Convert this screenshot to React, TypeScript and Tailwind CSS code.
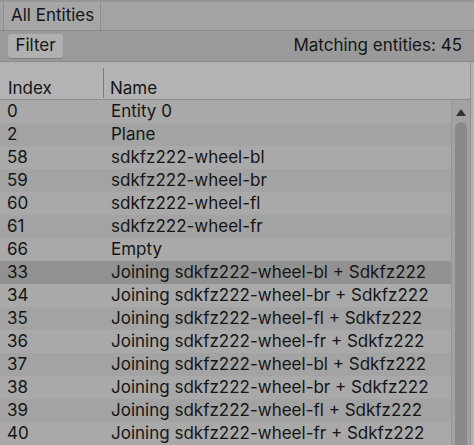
import React from 'react';

const rows: [string, string][] = [
  ['0', 'Entity 0'],
  ['2', 'Plane'],
  ['58', 'sdkfz222-wheel-bl'],
  ['59', 'sdkfz222-wheel-br'],
  ['60', 'sdkfz222-wheel-fl'],
  ['61', 'sdkfz222-wheel-fr'],
  ['66', 'Empty'],
  ['33', 'Joining sdkfz222-wheel-bl + Sdkfz222'],
  ['34', 'Joining sdkfz222-wheel-br + Sdkfz222'],
  ['35', 'Joining sdkfz222-wheel-fl + Sdkfz222'],
  ['36', 'Joining sdkfz222-wheel-fr + Sdkfz222'],
  ['37', 'Joining sdkfz222-wheel-bl + Sdkfz222'],
  ['38', 'Joining sdkfz222-wheel-br + Sdkfz222'],
  ['39', 'Joining sdkfz222-wheel-fl + Sdkfz222'],
  ['40', 'Joining sdkfz222-wheel-fr + Sdkfz222'],
];

export default function App() {
  return (
    <div
      className="w-[474px] h-[445px] overflow-hidden bg-[#a3a3a3] text-[#151515] flex flex-col"
      style={{ fontFamily: 'Inter, "Noto Sans", sans-serif' }}
    >
      {/* tab strip */}
      <div className="h-[31px] shrink-0 flex border-t-[2px] border-[#969696] border-b border-b-[#8a8a8a] bg-[#a3a3a3]">
        <div className="ml-[3px] w-[98px] border-x border-[#8e8e8e] bg-[#a6a6a6] flex items-center pl-[7px] text-[17px]">
          All Entities
        </div>
      </div>

      {/* toolbar */}
      <div className="h-[31px] shrink-0 flex items-center justify-between bg-[#9a9a9a] border-b border-[#8a8a8a] pl-[8px] pr-[12px]">
        <div className="h-[24px] w-[55px] rounded-[3px] bg-[#b0b0b0] shadow-[0_1px_0_#7e7e7e] flex items-center justify-center text-[17px]">
          Filter
        </div>
        <div className="text-[17px]">Matching entities: 45</div>
      </div>

      <div className="flex flex-1 min-h-0">
        <div className="flex-1 flex flex-col min-w-0">
          {/* header */}
          <div className="h-[38px] shrink-0 flex items-end bg-[#b3b3b3] border-b border-[#8c8c8c] text-[17px] leading-[20px] pb-[1px]">
            <div className="w-[104px] pl-[8px] border-r border-[#7d7d7d] h-[30px] flex items-end">Index</div>
            <div className="pl-[6px]">Name</div>
          </div>
          <div className="flex flex-1 min-h-0">
            <div className="flex-1 flex flex-col">
              {rows.map(([idx, name], i) => (
                <div
                  key={idx + name}
                  className={
                    'h-[23px] shrink-0 flex items-center text-[17px] ' +
                    (idx === '33' ? 'bg-[#919191]' : i % 2 === 0 ? 'bg-[#a9a9a9]' : 'bg-[#a3a3a3]')
                  }
                >
                  <div className="w-[104px] pl-[7px]">{idx}</div>
                  <div className="pl-[7px] whitespace-nowrap">{name}</div>
                </div>
              ))}
            </div>
            {/* scrollbar */}
            <div className="w-[19px] shrink-0 bg-[#a2a2a2] border-l border-[#959595] flex flex-col items-center pt-[9px]">
              <svg width="10" height="7" viewBox="0 0 10 7">
                <polygon points="5,0 10,7 0,7" fill="#333" />
              </svg>
              <div className="mt-[6px] w-[12px] flex-1 rounded-t-[6px] bg-[#8a8a8a]" />
            </div>
          </div>
        </div>
        <div className="w-[4px] shrink-0 bg-[#b3b3b3] border-l border-[#909090]" />
      </div>
    </div>
  );
}
